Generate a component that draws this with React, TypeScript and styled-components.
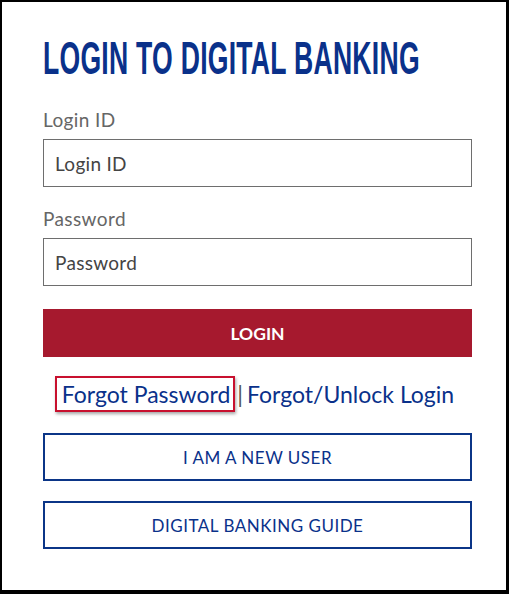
import React from 'react';
import styled, { createGlobalStyle } from 'styled-components';

const GlobalStyle = createGlobalStyle`
  html, body {
    margin: 0;
    padding: 0;
    background: #ffffff;
  }
  * {
    box-sizing: border-box;
  }
`;

const BLUE = '#0a318a';
const BODY_FONT = "Lato, 'Noto Sans', sans-serif";

const Card = styled.div`
  width: 509px;
  height: 594px;
  overflow: hidden;
  border-style: solid;
  border-color: #000;
  border-width: 2px 3px 4px 2px;
  padding: 34px 34px 0 41px;
  background: #fff;
  display: flex;
  flex-direction: column;
  font-family: ${BODY_FONT};
`;

// the heading font is a tall narrow display face: a regular bold sans is stretched upward
const TitleWrap = styled.div`
  height: 46px;
  margin-bottom: 27px;
`;

const Title = styled.h1`
  margin: 0;
  white-space: nowrap;
  font-family: 'Liberation Sans', Arial, sans-serif;
  font-weight: 700;
  font-size: 26.6px;
  line-height: 26.6px;
  letter-spacing: 0.25px;
  color: ${BLUE};
  transform: scaleY(1.73);
  transform-origin: left top;
`;

const Field = styled.label<{ $gap: number }>`
  display: flex;
  flex-direction: column;
  margin-bottom: ${({ $gap }) => $gap}px;
`;

const Label = styled.span`
  font-size: 19px;
  line-height: 22px;
  letter-spacing: 0.4px;
  color: #666;
  margin-bottom: 8px;
`;

const Input = styled.input`
  height: 48px;
  width: 100%;
  border: 1px solid #6e6e6e;
  border-radius: 0;
  padding: 0 11px;
  font-family: ${BODY_FONT};
  font-size: 19px;
  letter-spacing: 0.3px;
  color: #444;
  outline: none;
  &::placeholder {
    color: #444;
  }
`;

const PrimaryButton = styled.button`
  height: 48px;
  width: 100%;
  border: none;
  background: #a6192e;
  color: #fff;
  font-family: ${BODY_FONT};
  font-weight: 700;
  font-size: 17.5px;
  cursor: pointer;
  margin-bottom: 19px;
`;

const LinkRow = styled.div`
  display: flex;
  justify-content: center;
  align-items: center;
  height: 35px;
  margin-bottom: 22px;
  padding-right: 6px;
  font-size: 23px;
  color: ${BLUE};
`;

const TextLink = styled.a<{ $focused?: boolean }>`
  color: ${BLUE};
  text-decoration: none;
  padding: ${({ $focused }) => ($focused ? '2px 3px 2px 5px' : '0')};
  border: ${({ $focused }) => ($focused ? '2px solid #c8102e' : 'none')};
  box-shadow: ${({ $focused }) => ($focused ? '1px 2px 3px rgba(0,0,0,0.35)' : 'none')};
`;

const Divider = styled.span`
  color: #555;
  margin: 0 4px 0 2px;
`;

const OutlineButton = styled.button`
  height: 48px;
  width: 100%;
  border: 2px solid #0b3587;
  background: #fff;
  color: ${BLUE};
  font-family: ${BODY_FONT};
  font-size: 17px;
  letter-spacing: 0.5px;
  cursor: pointer;
  margin-bottom: 20px;
`;

export default function App() {
  return (
    <>
      <GlobalStyle />
      <Card>
        <TitleWrap>
          <Title>LOGIN TO DIGITAL BANKING</Title>
        </TitleWrap>
        <Field $gap={21}>
          <Label>Login ID</Label>
          <Input placeholder="Login ID" />
        </Field>
        <Field $gap={23}>
          <Label>Password</Label>
          <Input type="password" placeholder="Password" />
        </Field>
        <PrimaryButton>LOGIN</PrimaryButton>
        <LinkRow>
          <TextLink href="#" $focused>Forgot Password</TextLink>
          <Divider>|</Divider>
          <TextLink href="#">Forgot/Unlock Login</TextLink>
        </LinkRow>
        <OutlineButton>I AM A NEW USER</OutlineButton>
        <OutlineButton>DIGITAL BANKING GUIDE</OutlineButton>
      </Card>
    </>
  );
}
